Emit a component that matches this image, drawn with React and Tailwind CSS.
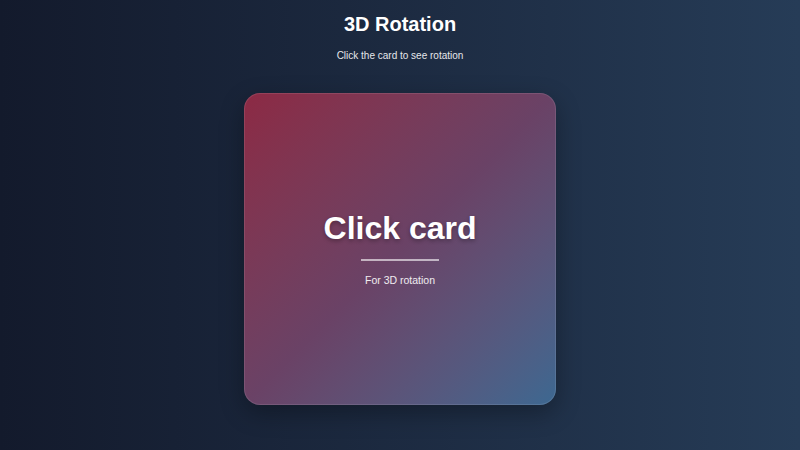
import React, { useState } from 'react';

/* ---------- flip card ---------- */
const FlipCard = () => {
  const [flipped, setFlipped] = useState(false);

  return (
    <div
      className="mt-[30px] h-[312px] w-[312px] [perspective:1000px] cursor-pointer"
      onClick={() => setFlipped((f) => !f)}
    >
      <div
        className={`flex h-full w-full flex-col items-center justify-center rounded-2xl border border-white/10 bg-gradient-to-br bg-origin-border from-[#8c2944] via-[#6a4266] to-[#3c6891] pt-[2px] shadow-[0_8px_24px_rgba(0,0,0,0.3)] transition-transform duration-700 ${
          flipped ? '[transform:rotateY(360deg)]' : ''
        }`}
      >
        <h2 className="text-[32px] font-bold leading-none text-white [text-shadow:0_2px_4px_rgba(0,0,0,0.3)]">
          Click card
        </h2>
        <div className="mt-[15px] h-[2px] w-[78px] bg-white/60" />
        <p className="mt-[12px] text-[10.5px] text-white/90">For 3D rotation</p>
      </div>
    </div>
  );
};

const App = () => {
  return (
    <div className="flex min-h-screen w-full flex-col items-center bg-gradient-to-r from-[#131a2c] to-[#263c57] pt-[12px] font-['Liberation_Sans',Arial,sans-serif]">
      <h1 className="text-[20px] font-bold leading-[24px] text-white">3D Rotation</h1>
      <p className="mt-[13px] text-[10px] leading-[14px] text-gray-200">
        Click the card to see rotation
      </p>
      <FlipCard />
    </div>
  );
};

export default App;
